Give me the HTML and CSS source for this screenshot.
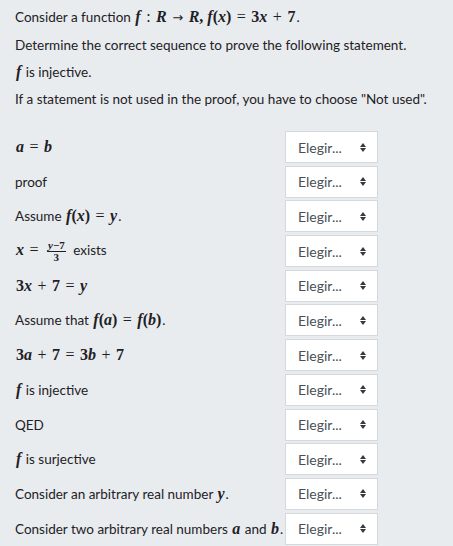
FILE: index.html
```html
<!DOCTYPE html>
<html lang="en">
<head>
  <meta charset="UTF-8" />
  <meta name="viewport" content="width=device-width, initial-scale=1.0" />
  <title>Question</title>
  <link rel="stylesheet" href="styles.css">
</head>
<body>
  <div class="question">
    <p>Consider a function <span class="m"><i>f</i> <span class="op">:</span> <i>R</i> <span class="op arrow">&rarr;</span> <i>R</i>, <i>f</i>(<i>x</i>) <span class="op">=</span> 3<i>x</i> <span class="op">+</span> 7</span>.</p>
    <p>Determine the correct sequence to prove the following statement.</p>
    <p><span class="m"><i>f</i></span> is injective.</p>
    <p>If a statement is not used in the proof, you have to choose "Not used".</p>

    <div class="matches">
      <div class="label"><span><span class="m"><i>a</i> <span class="op">=</span> <i>b</i></span></span></div>
      <div class="select"><span>Elegir...</span><span class="arrows"></span></div>

      <div class="label"><span>proof</span></div>
      <div class="select"><span>Elegir...</span><span class="arrows"></span></div>

      <div class="label"><span>Assume <span class="m"><i>f</i>(<i>x</i>) <span class="op">=</span> <i>y</i></span>.</span></div>
      <div class="select"><span>Elegir...</span><span class="arrows"></span></div>

      <div class="label"><span><span class="m"><i>x</i> <span class="op">=</span> <span class="frac"><span class="num"><i>y</i>&minus;7</span><span class="den">3</span></span></span> exists</span></div>
      <div class="select"><span>Elegir...</span><span class="arrows"></span></div>

      <div class="label"><span><span class="m">3<i>x</i> <span class="op">+</span> 7 <span class="op">=</span> <i>y</i></span></span></div>
      <div class="select"><span>Elegir...</span><span class="arrows"></span></div>

      <div class="label"><span>Assume that <span class="m"><i>f</i>(<i>a</i>) <span class="op">=</span> <i>f</i>(<i>b</i>)</span>.</span></div>
      <div class="select"><span>Elegir...</span><span class="arrows"></span></div>

      <div class="label"><span><span class="m">3<i>a</i> <span class="op">+</span> 7 <span class="op">=</span> 3<i>b</i> <span class="op">+</span> 7</span></span></div>
      <div class="select"><span>Elegir...</span><span class="arrows"></span></div>

      <div class="label"><span><span class="m"><i>f</i></span> is injective</span></div>
      <div class="select"><span>Elegir...</span><span class="arrows"></span></div>

      <div class="label"><span>QED</span></div>
      <div class="select"><span>Elegir...</span><span class="arrows"></span></div>

      <div class="label"><span><span class="m"><i>f</i></span> is surjective</span></div>
      <div class="select"><span>Elegir...</span><span class="arrows"></span></div>

      <div class="label"><span>Consider an arbitrary real number <span class="m"><i>y</i></span>.</span></div>
      <div class="select"><span>Elegir...</span><span class="arrows"></span></div>

      <div class="label"><span>Consider two arbitrary real numbers <span class="m"><i>a</i></span> and <span class="m"><i>b</i></span>.</span></div>
      <div class="select"><span>Elegir...</span><span class="arrows"></span></div>
    </div>
  </div>
</body>
</html>
```

FILE: styles.css
```css
body { margin: 0; background: #e9ecef; font-family: Lato, "Open Sans", Arial, sans-serif; font-size: 13.5px; color: #1d2125; }
.question { padding: 7px 15px 0 15px; }
.question p { margin: 0 0 7px 0; line-height: 20px; white-space: nowrap; }
.m { font-family: "Liberation Serif", "DejaVu Serif", serif; font-weight: 700; font-size: 16px; padding: 0 1px; }
.m i { font-style: italic; }
.m .op { font-weight: 400; padding: 0 1.5px; }
.m .arrow { font-family: "DejaVu Sans", sans-serif; font-size: 13px; }
.frac { display: inline-flex; flex-direction: column; align-items: center; vertical-align: middle; font-size: 11px; line-height: 11px; margin: 0 3px; }
.frac .num { border-bottom: 1px solid #1d2125; padding: 0 1px; }
.matches { display: grid; grid-template-columns: 264px 93px; column-gap: 6px; row-gap: 2.7px; margin-top: 22px; }
.label { display: flex; align-items: center; height: 32px; white-space: nowrap; }
.select { height: 32px; box-sizing: border-box; background: #fff; border: 1px solid #d5d9dd; display: flex; align-items: center; justify-content: space-between; padding: 0 10px 0 12px; color: #495057; font-size: 14px; }
.arrows { width: 7px; height: 9px; position: relative; }
.arrows::before, .arrows::after { content: ""; position: absolute; left: 0; border-left: 3.5px solid transparent; border-right: 3.5px solid transparent; }
.arrows::before { top: 0; border-bottom: 4px solid #343a40; }
.arrows::after { bottom: 0; border-top: 4px solid #343a40; }
```
